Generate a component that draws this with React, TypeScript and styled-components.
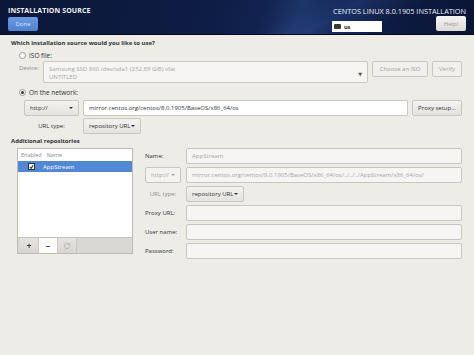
import React from "react";
import styled, { createGlobalStyle } from "styled-components";

const BG = "#edece7";
const BORDER = "#c8c6bf";
const TEXT = "#2e3436";
const DIM = "#8a8c8a";

const GlobalStyle = createGlobalStyle`
	html, body {
		margin: 0;
		padding: 0;
		width: 474px;
		height: 355px;
		overflow: hidden;
		background: ${BG};
		font-family: "Open Sans", "DejaVu Sans", sans-serif;
		color: ${TEXT};
	}
	* {
		box-sizing: border-box;
	}
`;

const Page = styled.div`
	width: 474px;
	height: 355px;
	display: flex;
	flex-direction: column;
	font-size: 6.5px;
`;

const Header = styled.div`
	height: 35px;
	flex: none;
	display: flex;
	justify-content: space-between;
	padding: 6px 8px 0 8px;
	background:
		linear-gradient(115deg, transparent 0 55%, rgba(70, 100, 170, 0.22) 62%, transparent 70%),
		linear-gradient(150deg, transparent 0 60%, rgba(60, 95, 165, 0.25) 68%, transparent 80%),
		linear-gradient(100deg, #0b1738 0%, #0e1d45 45%, #13285a 65%, #0c1a40 85%, #0a1535 100%);
	border-bottom: 1px solid #050a1a;
`;

const HeaderSide = styled.div<{ $right?: boolean }>`
	display: flex;
	flex-direction: column;
	align-items: ${(p) => (p.$right ? "flex-end" : "flex-start")};
	gap: ${(p) => (p.$right ? "0" : "2px")};
`;

const HeaderTitle = styled.div`
	color: #f2f2f2;
	font-size: 7px;
	font-weight: 700;
	letter-spacing: 0.1px;
	line-height: 9px;
`;

const ProductTitle = styled.div`
	color: #eef0f4;
	font-size: 7.3px;
	line-height: 9px;
	padding-top: 1px;
`;

const DoneButton = styled.div`
	width: 30px;
	height: 14px;
	border-radius: 2px;
	background: linear-gradient(#6a9ae0, #4f82d2);
	color: #dfe8f6;
	font-size: 6px;
	display: flex;
	align-items: center;
	justify-content: center;
`;

const HeaderRow = styled.div`
	display: flex;
	align-items: flex-end;
	gap: 54px;
`;

const Keyboard = styled.div`
	width: 50px;
	height: 11px;
	background: #fff;
	display: flex;
	align-items: center;
	gap: 3px;
	padding-left: 2px;
	margin-bottom: -1px;
	font-size: 5.5px;
	font-weight: 700;
	color: #222;
`;

const KeyIcon = styled.div`
	width: 7px;
	height: 5px;
	background: #3a3a3a;
	border-radius: 1px;
`;

const HelpButton = styled.div`
	width: 30px;
	height: 15px;
	border-radius: 2px;
	background: linear-gradient(#f5f5f3, #dcdbd7);
	color: #9a9a98;
	font-size: 6px;
	display: flex;
	align-items: center;
	justify-content: center;
`;

const Body = styled.div`
	flex: 1;
	padding: 4px 12px 0 11px;
	display: flex;
	flex-direction: column;
`;

const Heading = styled.div<{ $top?: number }>`
	font-weight: 700;
	font-size: 6px;
	line-height: 9px;
	margin-top: ${(p) => p.$top ?? 0}px;
`;

const RadioRow = styled.div<{ $top: number }>`
	display: flex;
	align-items: center;
	gap: 3px;
	margin-top: ${(p) => p.$top}px;
	margin-left: 8px;
	line-height: 9px;
`;

const Radio = styled.div<{ $on?: boolean }>`
	width: 7px;
	height: 7px;
	border-radius: 50%;
	border: 1px solid #9a9892;
	background: #fff;
	display: flex;
	align-items: center;
	justify-content: center;
	&::after {
		content: "";
		width: 3px;
		height: 3px;
		border-radius: 50%;
		background: ${(p) => (p.$on ? "#2e3436" : "transparent")};
	}
`;

const Row = styled.div<{ $top: number; $left?: number }>`
	display: flex;
	align-items: flex-start;
	gap: 4px;
	margin-top: ${(p) => p.$top}px;
	margin-left: ${(p) => p.$left ?? 0}px;
`;

const Label = styled.div<{ $w: number; $dim?: boolean; $h?: number; $align?: string }>`
	width: ${(p) => p.$w}px;
	height: ${(p) => p.$h ?? 16}px;
	flex: none;
	display: flex;
	align-items: center;
	justify-content: ${(p) => p.$align ?? "flex-start"};
	color: ${(p) => (p.$dim ? DIM : TEXT)};
	font-size: 6px;
`;

const Field = styled.div<{ $w?: number; $h?: number; $disabled?: boolean }>`
	width: ${(p) => (p.$w ? `${p.$w}px` : "auto")};
	flex: ${(p) => (p.$w ? "none" : "1")};
	height: ${(p) => p.$h ?? 16}px;
	border: 1px solid ${BORDER};
	border-radius: 2px;
	background: ${(p) => (p.$disabled ? "#f6f5f3" : "#fff")};
	color: ${(p) => (p.$disabled ? "#a5a6a4" : TEXT)};
	font-size: 6px;
	padding: 0 5px;
	display: flex;
	align-items: center;
	justify-content: space-between;
	white-space: nowrap;
	overflow: hidden;
`;

const DeviceField = styled(Field)`
	align-items: flex-start;
	padding-top: 3px;
`;

const DeviceText = styled.div`
	line-height: 8px;
	white-space: normal;
`;

const Arrow = styled.span`
	margin-top: 6px;
	font-size: 5px;
	color: #555;
`;

const Combo = styled.div<{ $w: number; $h?: number; $disabled?: boolean }>`
	width: ${(p) => p.$w}px;
	height: ${(p) => p.$h ?? 16}px;
	flex: none;
	border: 1px solid ${BORDER};
	border-radius: 2px;
	background: ${(p) => (p.$disabled ? "#f4f3f0" : "linear-gradient(#f3f2ef, #e4e3df)")};
	color: ${(p) => (p.$disabled ? "#a5a6a4" : TEXT)};
	font-size: 6px;
	padding: 0 5px 0 5px;
	display: flex;
	align-items: center;
	justify-content: space-between;
	&::after {
		content: "";
		border-left: 2px solid transparent;
		border-right: 2px solid transparent;
		border-top: 2.5px solid ${(p) => (p.$disabled ? "#a5a6a4" : "#2e3436")};
	}
`;

const Button = styled.div<{ $w: number; $h?: number; $disabled?: boolean }>`
	width: ${(p) => p.$w}px;
	height: ${(p) => p.$h ?? 16}px;
	flex: none;
	border: 1px solid ${BORDER};
	border-radius: 2px;
	background: ${(p) => (p.$disabled ? "#f1f0ed" : "linear-gradient(#f4f3f1, #e3e2de)")};
	color: ${(p) => (p.$disabled ? "#a0a19f" : TEXT)};
	font-size: 6px;
	display: flex;
	align-items: center;
	justify-content: center;
`;

const Repos = styled.div`
	display: flex;
	gap: 12px;
	margin-top: 2px;
	margin-left: 6px;
`;

const RepoList = styled.div`
	width: 116px;
	height: 106px;
	flex: none;
	border: 1px solid #bdbbb4;
	background: #fff;
	display: flex;
	flex-direction: column;
`;

const ListHead = styled.div`
	display: flex;
	height: 12px;
	align-items: center;
	color: ${DIM};
	font-size: 5.5px;
	padding-left: 3px;
	gap: 5px;
`;

const ListRow = styled.div<{ $selected?: boolean }>`
	display: flex;
	height: 11px;
	align-items: center;
	background: ${(p) => (p.$selected ? "#5287d6" : "transparent")};
	color: ${(p) => (p.$selected ? "#fff" : TEXT)};
	padding-left: 10px;
	gap: 8px;
	font-size: 6px;
`;

const Check = styled.div`
	width: 7px;
	height: 7px;
	background: #fff;
	border: 1px solid #2e3436;
	display: flex;
	align-items: center;
	justify-content: center;
`;

const ListSpace = styled.div`
	flex: 1;
`;

const Toolbar = styled.div`
	height: 16px;
	background: #d9d8d3;
	border-top: 1px solid #c4c2bb;
	display: flex;
	padding-left: 2px;
`;

const ToolButton = styled.div<{ $active?: boolean; $disabled?: boolean }>`
	width: 19px;
	height: 100%;
	display: flex;
	align-items: center;
	justify-content: center;
	background: ${(p) => (p.$active ? "#fbfbfa" : "linear-gradient(#e6e5e1, #d6d5d0)")};
	border-right: 1px solid #cac8c2;
	color: ${(p) => (p.$disabled ? "#a8a8a6" : "#2e3436")};
	font-size: 8px;
	font-weight: 700;
`;

const RepoForm = styled.div`
	flex: 1;
	display: grid;
	grid-template-columns: 36px 1fr;
	column-gap: 5px;
	row-gap: 3px;
`;

const SubRow = styled.div`
	display: flex;
	gap: 4px;
`;

export default function App() {
	return (
		<Page>
			<GlobalStyle />
			<Header>
				<HeaderSide>
					<HeaderTitle>INSTALLATION SOURCE</HeaderTitle>
					<DoneButton>Done</DoneButton>
				</HeaderSide>
				<HeaderSide $right>
					<ProductTitle>CENTOS LINUX 8.0.1905 INSTALLATION</ProductTitle>
					<HeaderRow>
						<Keyboard>
							<KeyIcon />
							us
						</Keyboard>
						<HelpButton>Help!</HelpButton>
					</HeaderRow>
				</HeaderSide>
			</Header>

			<Body>
				<Heading>Which installation source would you like to use?</Heading>

				<RadioRow $top={3}>
					<Radio />
					ISO file:
				</RadioRow>
				<Row $top={1} $left={10}>
					<Label $w={18} $dim $h={13} $align="flex-end">
						Device:
					</Label>
					<DeviceField $disabled $h={22}>
						<DeviceText>
							Samsung SSD 860 /dev/sda1 (232.89 GiB) vfat
							<br />
							UNTITLED
						</DeviceText>
						<Arrow>▼</Arrow>
					</DeviceField>
					<Button $w={56} $disabled>
						Choose an ISO
					</Button>
					<Button $w={30} $disabled>
						Verify
					</Button>
				</Row>

				<RadioRow $top={5}>
					<Radio $on />
					On the network:
				</RadioRow>
				<Row $top={3} $left={13}>
					<Combo $w={55}>http://</Combo>
					<Field>mirror.centos.org/centos/8.0.1905/BaseOS/x86_64/os</Field>
					<Button $w={50}>Proxy setup...</Button>
				</Row>
				<Row $top={2} $left={13}>
					<Label $w={55} $align="center">
						URL type:
					</Label>
					<Combo $w={58}>repository URL</Combo>
				</Row>

				<Heading $top={3}>Additional repositories</Heading>
				<Repos>
					<RepoList>
						<ListHead>
							<span>Enabled</span>
							<span>Name</span>
						</ListHead>
						<ListRow $selected>
							<Check>
								<svg width="6" height="6" viewBox="0 0 6 6">
									<path d="M1 3 L2.5 4.6 L5 1" stroke="#2e3436" strokeWidth="1.3" fill="none" />
								</svg>
							</Check>
							AppStream
						</ListRow>
						<ListSpace />
						<Toolbar>
							<ToolButton>+</ToolButton>
							<ToolButton $active>−</ToolButton>
							<ToolButton $disabled>
								<svg width="8" height="8" viewBox="0 0 8 8">
									<path
										d="M6.3 2.6 A2.6 2.6 0 1 0 6.6 4.6"
										stroke="#b0b0ae"
										strokeWidth="0.9"
										fill="none"
									/>
									<path d="M6.8 1 L6.6 3 L4.8 2.6" stroke="#b0b0ae" strokeWidth="0.9" fill="none" />
								</svg>
							</ToolButton>
						</Toolbar>
					</RepoList>

					<RepoForm>
						<Label $w={36}>Name:</Label>
						<Field $disabled>AppStream</Field>

						<Combo $w={36} $disabled>
							http://
						</Combo>
						<Field $disabled>mirror.centos.org/centos/8.0.1905/BaseOS/x86_64/os/../../../AppStream/x86_64/os/</Field>

						<Label $w={36} $dim $align="center">
							URL type:
						</Label>
						<SubRow>
							<Combo $w={58}>repository URL</Combo>
						</SubRow>

						<Label $w={36}>Proxy URL:</Label>
						<Field $disabled />

						<Label $w={36}>User name:</Label>
						<Field $disabled />

						<Label $w={36}>Password:</Label>
						<Field $disabled />
					</RepoForm>
				</Repos>
			</Body>
		</Page>
	);
}
